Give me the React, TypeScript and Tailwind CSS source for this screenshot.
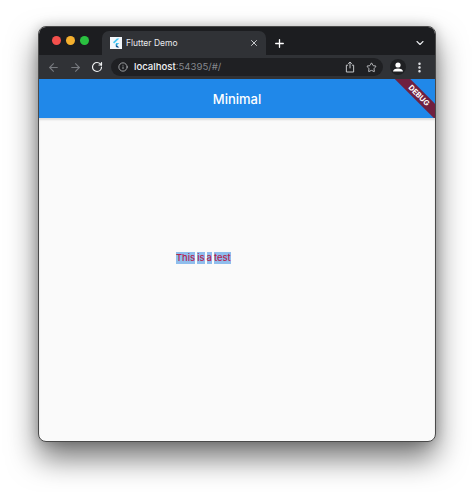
import { ArrowLeft, ArrowRight, ChevronDown, Info, Plus, RotateCw, Star, X, EllipsisVertical } from 'lucide-react';

const font = "font-['Inter','Liberation_Sans',sans-serif]";

function FlutterLogo() {
    return (
        <svg width="12" height="12" viewBox="0 0 12 12">
            <rect width="12" height="12" fill="#f4f7fb" />
            <path d="M6.9 1.5h2.4L4.2 6.4 3 5.3z" fill="#44c7f4" />
            <path d="M6.9 5.9h2.4L6.9 8.2l-1.2-1.1z" fill="#44c7f4" />
            <path d="M5.7 7.1l1.2-1.1 0 4.2-1.2-1.1z" fill="#1c9ad6" />
            <path d="M6.9 8.2l2.4 2.2H6.9L5.7 9.2z" fill="#0d4f8b" />
        </svg>
    );
}

function ShareIcon() {
    return (
        <svg width="10" height="12" viewBox="0 0 11 13" fill="none" stroke="#c4c6c9" strokeWidth="1.1">
            <path d="M3.4 4.5H1.5v7.5h8V4.5H7.6" />
            <path d="M5.5 8V1M3.5 2.9 5.5 1l2 1.9" />
        </svg>
    );
}

function ProfileIcon() {
    return (
        <svg width="16" height="16" viewBox="0 0 16 16">
            <circle cx="8" cy="8" r="8" fill="#1f2023" />
            <circle cx="8" cy="6" r="2.6" fill="#ffffff" />
            <path d="M3 12.5c0-2 2.4-3 5-3s5 1 5 3z" fill="#ffffff" />
        </svg>
    );
}

export default function App() {
    return (
        <div className={`w-[474px] h-[492px] bg-white pt-[26px] pl-[38px] overflow-hidden ${font}`}>
            <div className="w-[398px] h-[416px] rounded-[8px] overflow-hidden bg-[#fafafa] border border-[#4a4a4a] flex flex-col shadow-[0_16px_30px_rgba(0,0,0,0.55),0_0_12px_rgba(0,0,0,0.2)]">
                {/* Tab strip */}
                <div className="h-[28px] shrink-0 bg-[#1c1d20] flex items-end">
                    <div className="flex items-center gap-[5px] pl-[13px] pb-[2px] self-start h-full">
                        <span className="w-[9px] h-[9px] rounded-full bg-[#f4504c]" />
                        <span className="w-[9px] h-[9px] rounded-full bg-[#f5b02e]" />
                        <span className="w-[9px] h-[9px] rounded-full bg-[#2ac140]" />
                    </div>
                    <div className="ml-[13px] w-[164px] h-[24px] rounded-t-[7px] bg-[#303236] flex items-center pl-[8px] pr-[7px]">
                        <FlutterLogo />
                        <span className="ml-[4px] text-[8.5px] text-[#e8eaed] flex-1">Flutter Demo</span>
                        <X size={10} color="#e8eaed" strokeWidth={2} />
                    </div>
                    <div className="ml-[7px] h-[24px] flex items-center">
                        <Plus size={13} color="#ffffff" strokeWidth={2.4} />
                    </div>
                    <div className="ml-auto mr-[9px] h-[24px] flex items-center">
                        <ChevronDown size={12} color="#e8eaed" strokeWidth={2.2} />
                    </div>
                </div>

                {/* Toolbar */}
                <div className="h-[24px] shrink-0 bg-[#303236] flex items-center pl-[8px]">
                    <ArrowLeft size={13} color="#777a7f" strokeWidth={2} />
                    <ArrowRight size={13} color="#777a7f" strokeWidth={2} className="ml-[9px]" />
                    <RotateCw size={12} color="#f1f3f4" strokeWidth={2.4} className="ml-[9px]" />
                    <div className="ml-[8px] w-[272px] h-[18px] rounded-full bg-[#1f2023] flex items-center pl-[7px] pr-[6px]">
                        <Info size={10} color="#c4c6c9" strokeWidth={1.8} />
                        <span className="ml-[6px] text-[9.6px] font-medium text-[#f1f3f4] flex-1">
                            localhost<span className="font-normal text-[#85888d]">:54395/#/</span>
                        </span>
                        <ShareIcon />
                        <Star size={11} color="#d4d6d9" strokeWidth={1.8} className="ml-[11px]" />
                    </div>
                    <div className="ml-[7px] flex items-center">
                        <ProfileIcon />
                    </div>
                    <EllipsisVertical size={13} color="#e8eaed" strokeWidth={2.6} className="ml-[7px]" />
                </div>

                {/* App bar */}
                <div className="relative h-[39px] shrink-0 bg-[#2088e9] overflow-hidden flex items-center justify-center">
                    <span className="text-[13px] font-medium text-white mt-[2px]">Minimal</span>
                    {/* Debug banner */}
                    <div className="absolute right-[-20px] top-[11px] w-[72px] h-[11px] rotate-45 bg-[#70203f] flex items-center justify-center">
                        <span className="text-[7.5px] font-bold text-white">DEBUG</span>
                    </div>
                </div>

                {/* Body */}
                <div className="flex-1 pt-[134px] pl-[137px] shadow-[inset_0_2px_2px_rgba(0,0,0,0.12)]">
                    <div className="flex gap-[2px] text-[9.4px] font-medium leading-[12px] text-[#b5234f]">
                        <span className="bg-[#8fbdec]">This</span>
                        <span className="bg-[#8fbdec]">is</span>
                        <span className="bg-[#8fbdec]">a</span>
                        <span className="bg-[#8fbdec]">test</span>
                    </div>
                </div>
            </div>
        </div>
    );
}
